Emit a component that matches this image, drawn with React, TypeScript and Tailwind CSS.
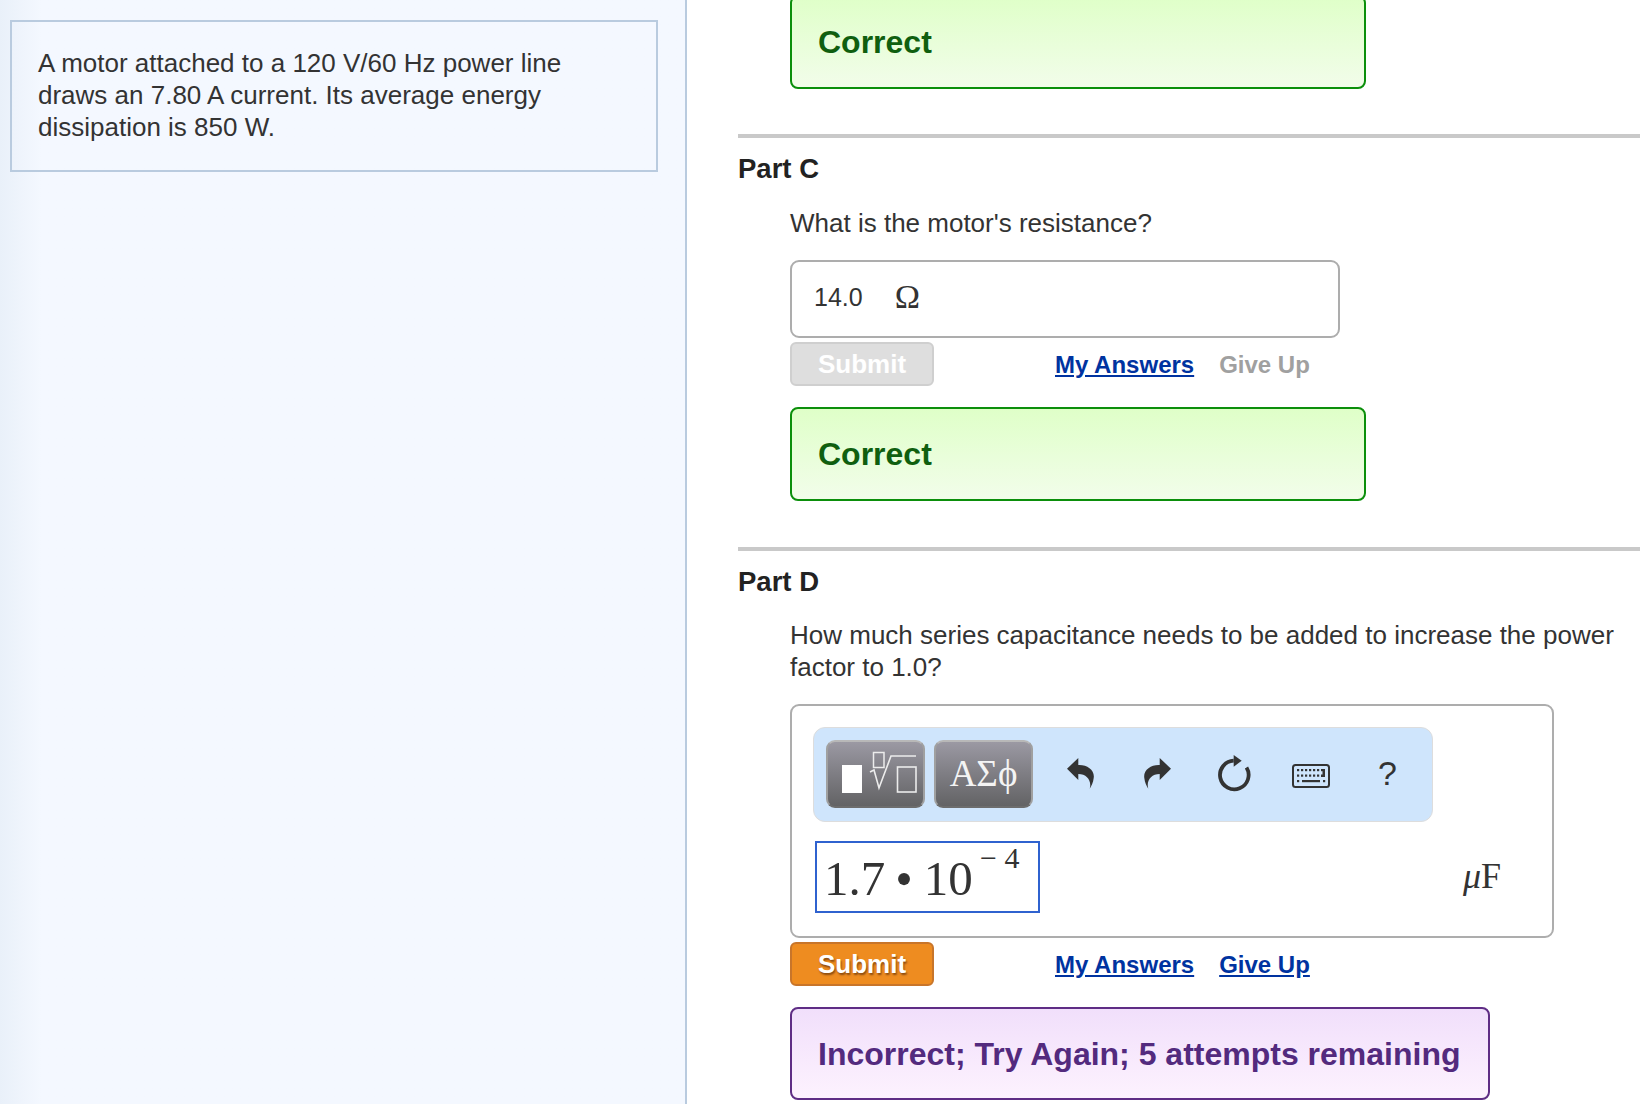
const sans = "font-['Liberation_Sans',Arial,sans-serif]";
const serif = "font-['Liberation_Serif','Times_New_Roman',serif]";

function Feedback({ text, kind, extra }: { text: string; kind: "ok" | "bad"; extra: string }) {
  const c =
    kind === "ok"
      ? "border-[#0b8f0b] bg-gradient-to-b from-[#dfffc8] to-[#f2fdea] text-[#0f5f0f] w-[576px] h-[94px] "
      : "border-[#5f2d85] bg-gradient-to-b from-[#f1dffb] to-[#fdf2fe] text-[#532a7e] w-[700px] h-[93px] ";
  return (
    <div className={c + "border-2 rounded-[8px] pl-[26px] flex items-center text-[32px] font-bold shrink-0 " + extra}>
      {text}
    </div>
  );
}

function ActionRow({ active, extra }: { active: boolean; extra: string }) {
  return (
    <div className={"flex items-center h-[44px] " + extra}>
      <div
        className={
          "w-[144px] h-[44px] rounded-[6px] border-2 flex items-center justify-center text-[26px] font-bold text-white " +
          (active
            ? "bg-[#ee8c20] border-[#c8752a] [text-shadow:1px_2px_2px_#8a4a10]"
            : "bg-[#dedede] border-[#cfcfcf]")
        }
      >
        Submit
      </div>
      <span className="ml-[121px] mt-[2px] text-[24px] font-bold text-[#0033a0] underline">My Answers</span>
      <span className={"ml-[25px] mt-[2px] text-[24px] font-bold " + (active ? "text-[#0033a0] underline" : "text-[#a0a0a0]")}>
        Give Up
      </span>
    </div>
  );
}

function Undo({ flip }: { flip?: boolean }) {
  return (
    <svg width="27" height="31" viewBox="0 0 27 31" className={flip ? "-scale-x-100" : ""}>
      <path
        d="M0 10.7 L11.3 0 L11.3 7 C20 6.5 28 12 26.7 20 C26.2 24.5 24.5 28 22.7 30.7 C25 23 20 16 11.3 16 L11.3 22 Z"
        fill="#333"
      />
    </svg>
  );
}

function Reset() {
  return (
    <svg width="33" height="37" viewBox="0 0 33 37">
      <path d="M15.7 5.7 A14.3 14.3 0 1 0 28.5 12.5" fill="none" stroke="#333" strokeWidth="3.8" />
      <path d="M15.7 0 L23.7 5.7 L15.7 11.7 Z" fill="#333" />
    </svg>
  );
}

function Keyboard() {
  return (
    <svg width="38" height="24" viewBox="0 0 38 24" className="mt-[5px]">
      <rect x="1" y="1" width="36" height="22" rx="2.5" fill="none" stroke="#333" strokeWidth="2" />
      {[5, 9, 13, 17, 21, 25, 29].map((x) => (
        <rect key={x} x={x} y="5" width="2.2" height="2.2" fill="#333" />
      ))}
      {[5, 9, 13, 17, 21, 25].map((x) => (
        <rect key={x} x={x} y="10.5" width="2.2" height="2.2" fill="#333" />
      ))}
      <path d="M33 5 L33 13 L29 13 L29 10.5 L30.5 10.5 L30.5 5 Z" fill="#333" />
      <rect x="5" y="16" width="2.2" height="2.2" fill="#333" />
      <rect x="10" y="16" width="18" height="2.2" fill="#333" />
      <rect x="31" y="16" width="2.2" height="2.2" fill="#333" />
    </svg>
  );
}

function TemplatesIcon() {
  return (
    <svg width="99" height="67" viewBox="0 0 99 67" className="shrink-0">
      <rect x="16" y="25" width="20" height="28" fill="#fff" />
      <rect x="47.5" y="12.5" width="10.5" height="15" fill="none" stroke="#ececec" strokeWidth="1.5" />
      <path d="M44 32 L48 30 L53 48 L65 16 L90 16" fill="none" stroke="#ececec" strokeWidth="1.6" />
      <rect x="71.5" y="27" width="18.5" height="25" fill="none" stroke="#ececec" strokeWidth="1.6" />
    </svg>
  );
}

const toolButton =
  "w-[99px] h-[68px] rounded-[9px] bg-gradient-to-b from-[#9b99a3] to-[#636365] border-2 border-t-[#b8b8b8] border-x-[#a0a0a0] border-b-[#6d6d6d] flex items-center justify-center";

export default function App() {
  return (
    <div className={sans + " h-[1104px] w-[1646px] overflow-hidden flex bg-white text-[#333]"}>
      <div className="w-[687px] h-full shrink-0 border-r-2 border-[#b9cbdf] bg-gradient-to-r from-[#e9f0f9] from-0% via-[#f4f8ff] via-[6%] to-[#f4f8ff] pt-[20px] pl-[10px]">
        <div className="w-[648px] h-[152px] border-2 border-[#b9cbdf] pl-[26px] pt-[25px] text-[26px] leading-[32px]">
          A motor attached to a 120 V/60 Hz power line
          <br />
          draws an 7.80 A current. Its average energy
          <br />
          dissipation is 850 W.
        </div>
      </div>

      <div className="pl-[51px] w-[953px] shrink-0 flex flex-col">
        <Feedback text="Correct" kind="ok" extra="ml-[52px] -mt-[5px]" />
        <div className="mt-[45px] h-[4px] bg-[#c9c9c9] shrink-0" />
        <div className="mt-[15px] text-[27.5px] leading-[32px] font-bold text-[#222]">Part C</div>
        <div className="ml-[52px] mt-[22px] text-[26px] leading-[32px]">What is the motor's resistance?</div>
        <div className="ml-[52px] mt-[21px] w-[550px] h-[78px] shrink-0 border-2 border-[#adadad] rounded-[9px] bg-white flex items-center pl-[22px] pb-[3px] text-[25px]">
          14.0
          <span className={serif + " ml-[32px] text-[34px] -mt-[3px]"}>Ω</span>
        </div>
        <ActionRow active={false} extra="ml-[52px] mt-[4px]" />
        <Feedback text="Correct" kind="ok" extra="ml-[52px] mt-[21px]" />
        <div className="mt-[46px] h-[4px] bg-[#c9c9c9] shrink-0" />
        <div className="mt-[15px] text-[27.5px] leading-[32px] font-bold text-[#222]">Part D</div>
        <div className="ml-[52px] mt-[21px] text-[26px] leading-[32px]">
          How much series capacitance needs to be added to increase the power
          <br />
          factor to 1.0?
        </div>
        <div className="ml-[52px] mt-[21px] w-[764px] h-[234px] shrink-0 border-2 border-[#adadad] rounded-[9px] bg-white pl-[21px] pt-[21px]">
          <div className="w-[620px] h-[95px] rounded-[12px] bg-[#cfe5fc] border border-[#dddddd] flex items-center pl-[12px] pb-[2px]">
            <div className={toolButton}>
              <TemplatesIcon />
            </div>
            <div className={toolButton + " ml-[9px] text-[37px] text-[#f4f4f4] " + serif}>ΑΣϕ</div>
            <div className="w-[77px] ml-[9px] flex justify-center">
              <Undo />
            </div>
            <div className="w-[77px] flex justify-center">
              <Undo flip />
            </div>
            <div className="w-[77px] flex justify-center">
              <Reset />
            </div>
            <div className="w-[76px] flex justify-center">
              <Keyboard />
            </div>
            <div className="w-[77px] flex justify-center text-[34px] leading-none -mt-[2px]">?</div>
          </div>
          <div className="flex items-center mt-[19px]">
            <div className={serif + " ml-[2px] w-[225px] h-[72px] border-2 border-[#2f62cf] flex items-center pl-[7px] pt-[4px] text-[49px] text-[#333] relative"}>
              <span>1.7</span>
              <span className="ml-[10px] text-[50px]">•</span>
              <span className="ml-[11px]">10</span>
              <span className="absolute left-[163px] -top-[1px] text-[30px] leading-[32px]">− 4</span>
            </div>
            <div className={serif + " ml-[423px] text-[36px] text-[#333] -mt-[2px]"}>
              <i>μ</i>F
            </div>
          </div>
        </div>
        <ActionRow active extra="ml-[52px] mt-[4px]" />
        <Feedback text="Incorrect; Try Again; 5 attempts remaining" kind="bad" extra="ml-[52px] mt-[21px]" />
      </div>
    </div>
  );
}
